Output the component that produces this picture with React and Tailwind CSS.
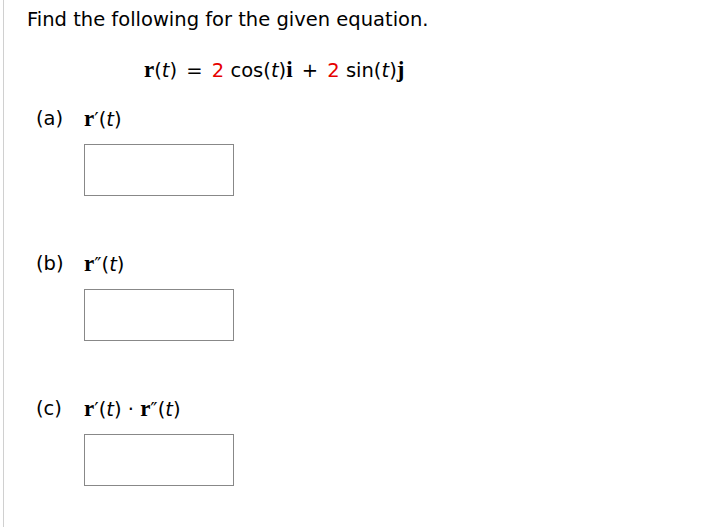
import React from "react";

const R = ({ children }) => (
  <span className="font-bold font-['Liberation_Serif',serif] text-[23px]">{children}</span>
);
const T = () => <i>t</i>;
const Op = ({ children }) => <span className="mx-[3px]">{children}</span>;

function Answer() {
  return <div className="ml-[84px] w-[150px] h-[52px] border border-[#888888] bg-white" />;
}

export default function App() {
  const parts = [
    { label: "(a)", expr: (<><R>r</R>′(<T />)</>) },
    { label: "(b)", expr: (<><R>r</R>″(<T />)</>) },
    { label: "(c)", expr: (<><R>r</R>′(<T />) · <R>r</R>″(<T />)</>) },
  ];

  return (
    <div className="w-[726px] h-[527px] bg-white font-['DejaVu_Sans',Verdana,sans-serif] text-[19.5px] text-black leading-[24px]">
      <div className="relative h-full">
        <div className="absolute left-[3px] top-0 h-full w-px bg-[#d0d0d0]" />
        <div className="pt-[8px]">
          <p className="pl-[27px]">Find the following for the given equation.</p>
          <p className="mt-[26px] pl-[144px]">
            <R>r</R>(<T />) <Op>=</Op> <span className="text-[#e60000]">2</span> cos(<T />)
            <R>i</R> <Op>+</Op> <span className="text-[#e60000]">2</span> sin(<T />)<R>j</R>
          </p>

          <div className="mt-[24px] flex flex-col gap-[56px]">
            {parts.map((p, i) => (
              <div key={i}>
                <div className="flex">
                  <span className="w-[84px] pl-[36px]">{p.label}</span>
                  <span>{p.expr}</span>
                </div>
                <div className="mt-[12px]">
                  <Answer />
                </div>
              </div>
            ))}
          </div>
        </div>
      </div>
    </div>
  );
}
